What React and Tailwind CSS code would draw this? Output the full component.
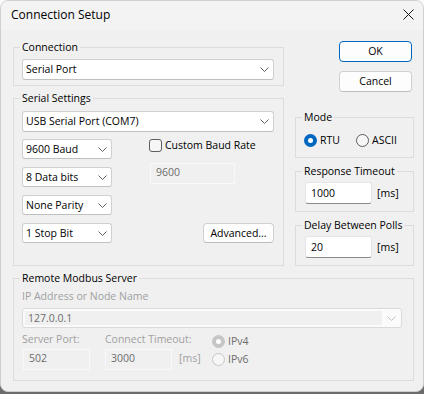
import React from "react";

const Chev = ({ c = "#606060" }) => (
  <svg width="9" height="5" viewBox="0 0 9 5" className="shrink-0">
    <path d="M0.5 0.5 L4.5 4.5 L8.5 0.5" fill="none" stroke={c} strokeWidth="1" />
  </svg>
);

const Combo = ({ text, cls = "" }) => (
  <div
    className={`flex items-center justify-between bg-white border border-[#d0d0d0] border-b-[#c0c0c0] rounded-[3px] pl-[3px] pr-[4px] ${cls}`}
  >
    <span className="leading-none whitespace-nowrap">{text}</span>
    <Chev />
  </div>
);

const Group = ({ label, cls = "", children }) => (
  <fieldset className={`border border-[#dcdcdc] ${cls}`}>
    <legend className="ml-[-2px] px-[2px] leading-[14px] whitespace-nowrap">{label}</legend>
    {children}
  </fieldset>
);

const RadioOn = () => (
  <span className="w-[13px] h-[13px] rounded-full bg-[#0067c0] flex items-center justify-center shrink-0">
    <span className="w-[5px] h-[5px] rounded-full bg-white" />
  </span>
);
const RadioOff = ({ c = "#5d5d5d" }) => (
  <span
    className="w-[13px] h-[13px] rounded-full border bg-[#f6f6f6] shrink-0"
    style={{ borderColor: c }}
  />
);

const Btn = ({ text, cls = "" }) => (
  <div
    className={`flex items-center justify-center bg-[#fdfdfd] border rounded-[4px] leading-none ${cls}`}
  >
    {text}
  </div>
);

const DisabledBox = ({ text, cls = "" }) => (
  <div
    className={`flex items-center border border-[#f9f9f9] bg-[#f0f0f0] text-[#6d6d6d] pl-[5px] pb-[2px] leading-none ${cls}`}
  >
    {text}
  </div>
);

const Edit = ({ text }) => (
  <div className="ml-[1px] w-[67px] h-[22px] flex items-center bg-white border border-[#e5e5e5] border-b-[#8a8a8a] rounded-[3px] pl-[5px] leading-none">
    {text}
  </div>
);

export default function App() {
  return (
    <div className="w-[424px] h-[394px] bg-[linear-gradient(to_bottom,#fafafa_0,#fafafa_370px,#6b6b6b_370px)] font-['Open_Sans',sans-serif] text-[10.5px] text-black">
      <div className="w-[424px] h-[392px] rounded-[8px] border border-[#cfcfcf] bg-[#f0f0f0] overflow-hidden flex flex-col">
        {/* Title bar */}
        <div className="h-[29px] shrink-0 bg-[#f3f3f3] flex items-center pl-[10px] pr-[9px] pb-[2px]">
          <span className="text-[12px] leading-none">Connection Setup</span>
          <svg className="ml-auto" width="11" height="11" viewBox="0 0 11 11">
            <path d="M0.5 0.5 L10.5 10.5 M10.5 0.5 L0.5 10.5" stroke="#1a1a1a" strokeWidth="1" fill="none" />
          </svg>
        </div>

        {/* Body */}
        <div className="pl-[12px] flex flex-col">
          <div className="flex">
            {/* Left column */}
            <div className="w-[271px] flex flex-col">
              <Group label="Connection" cls="mt-[10px] pl-[8px] pr-[9px] pt-[5px] pb-[5px]">
                <Combo text="Serial Port" cls="h-[21px]" />
              </Group>
              <Group label="Serial Settings" cls="mt-[5px] pl-[8px] pr-[9px] pt-[6px] pb-[22px]">
                <Combo text="USB Serial Port (COM7)" cls="h-[21px]" />
                <div className="flex mt-[7px]">
                  <div className="w-[90px] flex flex-col gap-[8px]">
                    <Combo text="9600 Baud" cls="h-[20px]" />
                    <Combo text="8 Data bits" cls="h-[20px]" />
                    <Combo text="None Parity" cls="h-[20px]" />
                    <Combo text="1 Stop Bit" cls="h-[20px]" />
                  </div>
                  <div className="ml-[37px] flex-1 flex flex-col">
                    <div className="flex items-center h-[13px]">
                      <span className="w-[13px] h-[13px] rounded-[3px] border border-[#5d5d5d] bg-[#f6f6f6] shrink-0" />
                      <span className="ml-[3px] leading-none whitespace-nowrap">Custom Baud Rate</span>
                    </div>
                    <DisabledBox text="9600" cls="mt-[11px] ml-[1px] w-[85px] h-[21px]" />
                    <Btn text="Advanced..." cls="mt-auto self-end w-[71px] h-[20px] border-[#d0d0d0] border-b-[#bcbcbc]" />
                  </div>
                </div>
              </Group>
            </div>

            {/* Right column */}
            <div className="ml-[11px] w-[119px] flex flex-col">
              <Btn text="OK" cls="mt-[11px] self-end mr-[2px] w-[73px] h-[21px] border-[#0067c0]" />
              <Btn text="Cancel" cls="mt-[9px] self-end mr-[2px] w-[73px] h-[21px] border-[#d0d0d0] border-b-[#bcbcbc]" />
              <Group label="Mode" cls="mt-[18px] pl-[8px] pr-[8px] pt-[10px] pb-[10px]">
                <div className="flex items-center h-[13px]">
                  <div className="w-[52px] flex items-center">
                    <RadioOn />
                    <span className="ml-[3px] leading-none">RTU</span>
                  </div>
                  <RadioOff />
                  <span className="ml-[3px] leading-none">ASCII</span>
                </div>
              </Group>
              <Group label="Response Timeout" cls="mt-[6px] pl-[8px] pr-[8px] pt-[4px] pb-[7px]">
                <div className="flex items-center">
                  <Edit text="1000" />
                  <span className="ml-[5px] leading-none">[ms]</span>
                </div>
              </Group>
              <Group label="Delay Between Polls" cls="mt-[6px] pl-[8px] pr-[8px] pt-[4px] pb-[7px]">
                <div className="flex items-center">
                  <Edit text="20" />
                  <span className="ml-[5px] leading-none">[ms]</span>
                </div>
              </Group>
            </div>
          </div>

          {/* Remote Modbus Server */}
          <Group label="Remote Modbus Server" cls="mt-[5px] w-[401px] pl-[8px] pr-[8px] pt-[4px] pb-[10px]">
            <div className="leading-[14px] text-[#a0a0a0]">IP Address or Node Name</div>
            <div className="mt-[5px] w-[380px] h-[20px] flex items-center border border-[#dadada] bg-[#fbfbfb] rounded-[3px] pl-[2px] pr-[5px]">
              <div className="w-[357px] h-[14px] bg-[#f0f0f0] flex items-center pl-[3px] text-[#6d6d6d] leading-none">
                127.0.0.1
              </div>
              <span className="ml-auto">
                <Chev c="#c0c0c0" />
              </span>
            </div>
            <div className="flex mt-[4px]">
              <div className="w-[68px] flex flex-col">
                <span className="leading-[14px] text-[#a0a0a0] whitespace-nowrap">Server Port:</span>
                <DisabledBox text="502" cls="mt-[3px] ml-[1px] w-[67px] h-[21px]" />
              </div>
              <div className="ml-[15px] w-[67px] flex flex-col">
                <span className="leading-[14px] text-[#a0a0a0] whitespace-nowrap">Connect Timeout:</span>
                <DisabledBox text="3000" cls="mt-[3px] w-[67px] h-[21px]" />
              </div>
              <div className="ml-[7px] w-[33px] self-end h-[21px] flex items-center pb-[2px] text-[#a0a0a0] leading-none">
                [ms]
              </div>
              <div className="flex flex-col">
                <div className="h-[18px] flex items-center">
                  <span className="w-[13px] h-[13px] rounded-full bg-[#c6c6c6] flex items-center justify-center shrink-0">
                    <span className="w-[5px] h-[5px] rounded-full bg-white" />
                  </span>
                  <span className="ml-[3px] leading-none text-[#6d6d6d]">IPv4</span>
                </div>
                <div className="h-[18px] flex items-center">
                  <RadioOff c="#c6c6c6" />
                  <span className="ml-[3px] leading-none text-[#6d6d6d]">IPv6</span>
                </div>
              </div>
            </div>
          </Group>
        </div>
      </div>
    </div>
  );
}
